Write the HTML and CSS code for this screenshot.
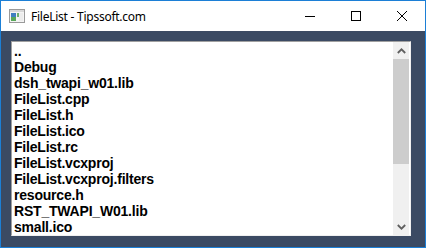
FILE: index.html
```html
<!DOCTYPE html>
<html>
<head>
<meta charset="utf-8">
<link rel="stylesheet" href="styles.css">
</head>
<body>
<div class="window">
  <div class="titlebar">
    <svg class="app-icon" width="16" height="14" viewBox="0 0 16 14">
      <rect x="0.5" y="0.5" width="15" height="13" fill="#f4f4f4" stroke="#9a9a9a"/>
      <rect x="1" y="1" width="14" height="2" fill="#d8d8d8"/>
      <rect x="2" y="4" width="5" height="8" fill="#3f7fbf"/>
      <rect x="2" y="8" width="5" height="4" fill="#58a85a"/>
      <rect x="8" y="4" width="2" height="4" fill="#6fb06f"/>
      <rect x="10" y="4" width="4" height="8" fill="#ececec"/>
    </svg>
    <span class="title">FileList - Tipssoft.com</span>
    <div class="controls">
      <div class="btn"><svg width="10" height="10" viewBox="0 0 10 10"><path d="M0 5.5H10" stroke="#000" stroke-width="1"/></svg></div>
      <div class="btn"><svg width="10" height="10" viewBox="0 0 10 10"><rect x="0.5" y="0.5" width="9" height="9" fill="none" stroke="#000"/></svg></div>
      <div class="btn"><svg width="10" height="10" viewBox="0 0 10 10"><path d="M0 0L10 10M10 0L0 10" stroke="#000" stroke-width="1"/></svg></div>
    </div>
  </div>
  <div class="client">
    <div class="listbox">
      <ul class="items">
        <li>..</li>
        <li>Debug</li>
        <li>dsh_twapi_w01.lib</li>
        <li>FileList.cpp</li>
        <li>FileList.h</li>
        <li>FileList.ico</li>
        <li>FileList.rc</li>
        <li>FileList.vcxproj</li>
        <li>FileList.vcxproj.filters</li>
        <li>resource.h</li>
        <li>RST_TWAPI_W01.lib</li>
        <li>small.ico</li>
      </ul>
      <div class="scrollbar">
        <div class="arrow"><svg width="9" height="6" viewBox="0 0 9 6"><path d="M0.8 5L4.5 1.3L8.2 5" fill="none" stroke="#606060" stroke-width="1.8"/></svg></div>
        <div class="track"><div class="thumb"></div></div>
        <div class="arrow"><svg width="9" height="6" viewBox="0 0 9 6"><path d="M0.8 1L4.5 4.7L8.2 1" fill="none" stroke="#606060" stroke-width="1.8"/></svg></div>
      </div>
    </div>
  </div>
</div>
</body>
</html>
```
FILE: styles.css
```css
html, body {
  margin: 0;
  padding: 0;
  background: #ffffff;
}
.window {
  width: 426px;
  height: 248px;
  box-sizing: border-box;
  border: 1px solid #1c7fd6;
  display: flex;
  flex-direction: column;
}
.titlebar {
  height: 30px;
  background: #ffffff;
  display: flex;
  align-items: center;
  flex-shrink: 0;
}
.app-icon {
  margin-left: 8px;
}
.title {
  margin-left: 6px;
  font-family: "Noto Sans", "Open Sans", sans-serif;
  font-size: 12px;
  color: #000;
  letter-spacing: -0.25px;
}
.controls {
  margin-left: auto;
  display: flex;
  height: 30px;
}
.btn {
  width: 46px;
  height: 30px;
  display: flex;
  align-items: center;
  justify-content: center;
}
.btn svg { display: block; }
.client {
  flex: 1;
  background: #3b4a63;
  padding: 10px 14px 11px 10px;
  display: flex;
}
.listbox {
  flex: 1;
  background: #ffffff;
  border-top: 1px solid #a0a0a0;
  border-left: 1px solid #a0a0a0;
  border-right: 1px solid #f0f0f0;
  border-bottom: 1px solid #f0f0f0;
  display: flex;
  overflow: hidden;
}
.items {
  list-style: none;
  margin: 0;
  padding: 1px 0 0 2px;
  flex: 1;
  font-family: "Liberation Sans", Arial, sans-serif;
  font-weight: bold;
  font-size: 14px;
  line-height: 16px;
  letter-spacing: -0.2px;
  color: #000;
}
.items li {
  height: 16px;
  white-space: nowrap;
}
.scrollbar {
  width: 16px;
  margin-right: 1px;
  background: #f0f0f0;
  display: flex;
  flex-direction: column;
}
.arrow {
  height: 17px;
  display: flex;
  align-items: center;
  justify-content: center;
  flex-shrink: 0;
}
.arrow svg { display: block; }
.track {
  flex: 1;
}
.thumb {
  height: 105px;
  background: #cdcdcd;
}
```
